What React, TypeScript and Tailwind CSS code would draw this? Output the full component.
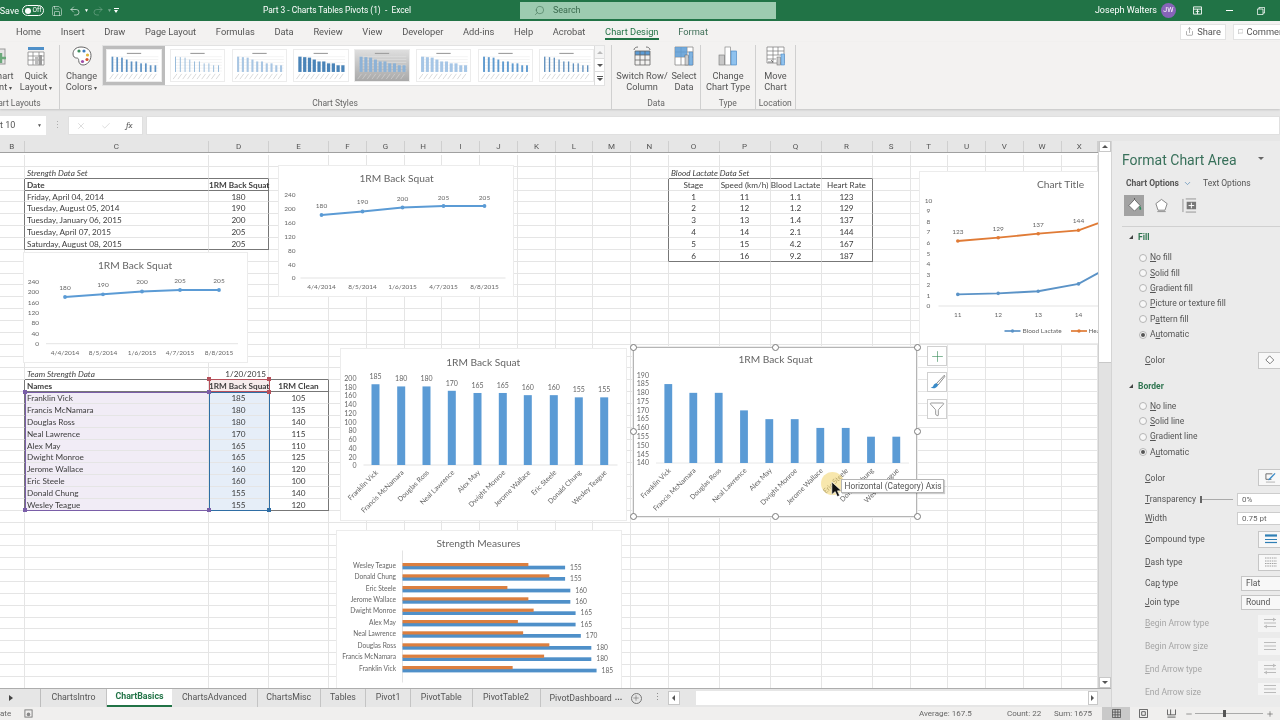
import React from "react";
import { Save, Undo2, Redo2, Search, Share, MessageSquare, Plus, Minus, Funnel, X, Check, ChevronDown } from "lucide-react";

const COLNAMES = ["B","C","D","E","F","G","H","I","J","K","L","M","N","O","P","Q","R","S","T","U","V","W","X"];
const GRIDCOLS = "grid grid-cols-[24.5px_184.5px_60px_60px_38px_38px_37px_38px_38px_38px_37px_38px_37.5px_51px_51px_51px_51px_38px_37.5px_38px_37.5px_38px_36.5px]";

type Cell = { t: string; a?: "l" | "c" | "r"; b?: boolean; i?: boolean };
const cells: Record<string, Cell> = {};
const put = (r: number, c: number, t: string, a: Cell["a"] = "c", b = false, i = false) => { cells[r + ":" + c] = { t, a, b, i }; };
put(1, 1, "Strength Data Set", "l", false, true);
put(2, 1, "Date", "l", true); put(2, 2, "1RM Back Squat", "c", true);
[["Friday, April 04, 2014", "180"], ["Tuesday, August 05, 2014", "190"], ["Tuesday, January 06, 2015", "200"], ["Tuesday, April 07, 2015", "205"], ["Saturday, August 08, 2015", "205"]].forEach((x, k) => { put(3 + k, 1, x[0], "l"); put(3 + k, 2, x[1]); });
put(1, 13, "Blood Lactate Data Set", "l", false, true);
["Stage", "Speed (km/h)", "Blood Lactate", "Heart Rate"].forEach((t, k) => put(2, 13 + k, t));
[["1","11","1.1","123"],["2","12","1.2","129"],["3","13","1.4","137"],["4","14","2.1","144"],["5","15","4.2","167"],["6","16","9.2","187"]].forEach((x, k) => x.forEach((t, j) => put(3 + k, 13 + j, t)));
put(18, 1, "Team Strength Data", "l", false, true); put(18, 2, "1/20/2015", "r");
put(19, 1, "Names", "l", true); put(19, 2, "1RM Back Squat", "c", true); put(19, 3, "1RM Clean", "c", true);
const TEAM: [string, number, number][] = [["Franklin Vick",185,105],["Francis McNamara",180,135],["Douglas Ross",180,140],["Neal Lawrence",170,115],["Alex May",165,110],["Dwight Monroe",165,125],["Jerome Wallace",160,120],["Eric Steele",160,100],["Donald Chung",155,140],["Wesley Teague",155,120]];
TEAM.forEach((x, k) => { put(20 + k, 1, x[0], "l"); put(20 + k, 2, String(x[1])); put(20 + k, 3, String(x[2])); });

const TABLES = [
  { r0: 2, r1: 7, c0: 1, c1: 2, hdr: true },
  { r0: 2, r1: 8, c0: 13, c1: 16, hdr: false },
  { r0: 19, r1: 29, c0: 1, c1: 3, hdr: true },
];
function cellBorder(r: number, c: number) {
  let right = false, bottom = false;
  for (const t of TABLES) {
    const inRows = r >= t.r0 && r <= t.r1, inCols = c >= t.c0 && c <= t.c1;
    if (inRows && (c === t.c1 || c === t.c0 - 1)) right = true;
    if (inCols && (r === t.r1 || r === t.r0 - 1 || (t.hdr && r === t.r0))) bottom = true;
  }
  return (right ? "border-r-[#777] " : "") + (bottom ? "border-b-[#777] " : "");
}

function SheetGrid() {
  const rows = Array.from({ length: 46 }, (_, r) => r);
  return (
    <div className={GRIDCOLS + " auto-rows-[11.87px] pt-[2px] [font-family:Lato,sans-serif] text-[8.2px] leading-[13px] text-[#3d3d3d]"}>
      {rows.flatMap((r) =>
        COLNAMES.map((_, c) => {
          const v = cells[r + ":" + c];
          let bg = "";
          if (c === 1 && r >= 20 && r <= 29) bg = "bg-[#f1ecf6] ";
          if (c === 2 && r >= 20 && r <= 29) bg = "bg-[#e6eef8] ";
          if (c === 2 && r === 19) bg = "bg-[#f6ecec] ";
          return (
            <div key={r + "-" + c} className={"border-r border-b border-[#e5e5e5] whitespace-nowrap " + bg + cellBorder(r, c) + (v ? (v.a === "l" ? "pl-[2.5px] " : v.a === "r" ? "pr-[2px] text-right " : "text-center ") + (v.b ? "font-bold " : "") + (v.i ? "italic " : "") : "")}>
              {v ? v.t : null}
            </div>
          );
        })
      )}
    </div>
  );
}

const BLUE = "#5b9bd5", LBL = "#666666";

function Chart({ cls, vb, title, tx, ty, children }: { cls: string; vb: string; title: string; tx: number; ty: number; children: React.ReactNode }) {
  return (
    <div className={"absolute bg-white ring-1 ring-[#ececec] overflow-hidden " + cls}>
      <svg viewBox={vb} className="block w-full h-full [font-family:Lato,sans-serif]">
        <text x={tx} y={ty + 3.5} textAnchor="middle" fontSize="10.2" fill={LBL}>{title}</text>
        {children}
      </svg>
    </div>
  );
}

function LineBack({ yl, xl, pts, vals, axisY, x0, x1, lx }: { yl: [string, number][]; xl: number; pts: [number, number][]; vals: [string, number][]; axisY: number; x0: number; x1: number; lx: number }) {
  const dates = ["4/4/2014", "8/5/2014", "1/6/2015", "4/7/2015", "8/8/2015"];
  return (
    <g fontSize="6.5" fill={LBL}>
      {yl.map(([t, y]) => <text key={t} x={lx} y={y + 2.2} textAnchor="end">{t}</text>)}
      <line x1={x0} x2={x1} y1={axisY} y2={axisY} stroke="#dcdcdc" strokeWidth="0.8" />
      <polyline points={pts.map((p) => p.join(",")).join(" ")} fill="none" stroke={BLUE} strokeWidth="2" />
      {pts.map((p, i) => <circle key={i} cx={p[0]} cy={p[1]} r="1.9" fill={BLUE} />)}
      {pts.map((p, i) => <text key={"v" + i} x={p[0]} y={vals[i][1] + 2.2} textAnchor="middle">{vals[i][0]}</text>)}
      {pts.map((p, i) => <text key={"d" + i} x={p[0]} y={xl + 2.2} textAnchor="middle">{dates[i]}</text>)}
    </g>
  );
}

function Column1() {
  const xs = [375, 400.7, 426, 451.3, 477, 502.3, 527.3, 553.3, 578.3, 603.7];
  const base = 465, u = 0.4365;
  return (
    <g fontSize="7" fill={LBL}>
      {[200,180,160,140,120,100,80,60,40,20,0].map((v) => <text key={v} x={356} y={base - v * u + 3.3} textAnchor="end">{v}</text>)}
      <line x1={363} x2={617} y1={base} y2={base} stroke="#dcdcdc" strokeWidth="0.8" />
      {TEAM.map(([n, v], i) => (
        <g key={n}>
          <rect x={xs[i] - 4} y={base - v * u} width="8" height={v * u} fill={BLUE} />
          <text x={xs[i]} y={base - v * u - 5} textAnchor="middle">{v}</text>
          <text transform={`rotate(-45 ${xs[i] + 3} 473)`} x={xs[i] + 3} y={473} textAnchor="end">{n}</text>
        </g>
      ))}
    </g>
  );
}

function ColumnSel() {
  const xs = [668.3, 693.3, 718.7, 744, 769.3, 794.7, 820.3, 845.7, 871, 896.3];
  const base = 463, u = 1.754;
  return (
    <g fontSize="7" fill={LBL}>
      {[190,185,180,175,170,165,160,155,150,145,140].map((v) => <text key={v} x={649} y={base - (v - 140) * u + 2.3} textAnchor="end">{v}</text>)}
      <line x1={656} x2={909} y1={base} y2={base} stroke="#e2e2e2" strokeWidth="0.8" />
      {TEAM.map(([n, v], i) => (
        <g key={n}>
          <rect x={xs[i] - 3.9} y={base - (v - 140) * u} width="7.8" height={(v - 140) * u} fill={BLUE} />
          <text transform={`rotate(-45 ${xs[i] + 3} 471)`} x={xs[i] + 3} y={471} textAnchor="end">{n}</text>
        </g>
      ))}
    </g>
  );
}

function Horizontal() {
  const ys = [668.7, 657.3, 646, 634, 622.7, 611.3, 600, 588.7, 577, 565.7];
  const u = 1.049, x0 = 402;
  return (
    <g fontSize="6.6" fill={LBL}>
      <line x1={x0} x2={x0} y1={550} y2={682} stroke="#dcdcdc" strokeWidth="0.8" />
      {TEAM.map(([n, v, o], i) => (
        <g key={n}>
          <text x={395.5} y={ys[i] + 1.5} textAnchor="end">{n}</text>
          <rect x={x0} y={ys[i] - 0.5} width={v * u} height="3.7" fill="#4f90c9" />
          <rect x={x0} y={ys[i] - 3.2} width={o * u} height="3.2" fill="#dc7f3f" />
          <text x={x0 + v * u + 5} y={ys[i] + 3.5}>{v}</text>
        </g>
      ))}
    </g>
  );
}

function Blood() {
  const xs = [957.3, 997.7, 1037.7, 1078, 1118];
  const b = [1.1, 1.2, 1.4, 2.1, 4.2].map((v) => 306 - 10.53 * v);
  const o = [241, 237.7, 233.7, 230.3, 216];
  const pl = (ys: number[]) => xs.map((x, i) => x + "," + ys[i]).join(" ");
  return (
    <g fontSize="6.5" fill={LBL}>
      {[10,9,8,7,6,5,4,3,2,1,0].map((v) => <text key={v} x={928} y={306 - 10.53 * v + 2.2} textAnchor="middle">{v}</text>)}
      <line x1={938} x2={1100} y1={306} y2={306} stroke="#dcdcdc" strokeWidth="0.8" />
      <polyline points={pl(b)} fill="none" stroke="#5b93c7" strokeWidth="1.8" />
      <polyline points={pl(o)} fill="none" stroke="#e07b36" strokeWidth="1.8" />
      {xs.map((x, i) => <circle key={"a" + i} cx={x} cy={b[i]} r="1.8" fill="#5b93c7" />)}
      {xs.map((x, i) => <circle key={"b" + i} cx={x} cy={o[i]} r="1.8" fill="#e07b36" />)}
      {["123","129","137","144"].map((t, i) => <text key={t} x={xs[i]} y={[234,231,227,223][i]} textAnchor="middle">{t}</text>)}
      {["11","12","13","14"].map((t, i) => <text key={t} x={xs[i]} y={317} textAnchor="middle">{t}</text>)}
      <line x1={1004} x2={1020} y1={331} y2={331} stroke="#5b93c7" strokeWidth="1.7" />
      <circle cx={1012} cy={331} r="1.7" fill="#5b93c7" />
      <text x={1022} y={333.2}>Blood Lactate</text>
      <line x1={1070.5} x2={1086.5} y1={331} y2={331} stroke="#e07b36" strokeWidth="1.7" />
      <circle cx={1078.5} cy={331} r="1.7" fill="#e07b36" />
      <text x={1088} y={333.2}>Heart Rate</text>
    </g>
  );
}

const HANDLES = [
  "left-[629.5px] top-[202.5px]", "left-[771.5px] top-[202.5px]", "left-[913.5px] top-[202.5px]",
  "left-[629.5px] top-[286.5px]", "left-[913.5px] top-[286.5px]",
  "left-[629.5px] top-[371.5px]", "left-[771.5px] top-[371.5px]", "left-[913.5px] top-[371.5px]",
];
const SELH = [
  "left-[207px] top-[236px] bg-[#b5505a]", "left-[267px] top-[236px] bg-[#b5505a]", "left-[267px] top-[249px] bg-[#b5505a]",
  "left-[207px] top-[249px] bg-[#7a5ea8]", "left-[22.5px] top-[249px] bg-[#7a5ea8]", "left-[22.5px] top-[367px] bg-[#7a5ea8]",
  "left-[207px] top-[367px] bg-[#7a5ea8]", "left-[267px] top-[367px] bg-[#2f6ea5]",
];

function Sheet() {
  return (
    <div className="relative w-[1098px] flex-1 overflow-hidden bg-white">
      <div className={GRIDCOLS + " h-[12px] bg-[#e6e6e6] border-b border-[#a0a0a0]"}>
        {COLNAMES.map((n) => <div key={n} className="border-r border-[#cfcfcf] text-center text-[8px] leading-[11px] text-[#555]">{n}</div>)}
      </div>
      <SheetGrid />

      <div className="absolute left-[24.5px] top-[250.5px] w-[185px] h-[119px] border-[1.5px] border-[#7a5ea8]" />
      <div className="absolute left-[209px] top-[250.5px] w-[60.5px] h-[119px] border-[1.5px] border-[#2f6ea5]" />
      <div className="absolute left-[209px] top-[238px] w-[60.5px] h-[13px] border-[1.5px] border-[#b5505a]" />
      {SELH.map((c) => <div key={c} className={"absolute w-[4px] h-[4px] " + c} />)}

      <Chart cls="left-[278.5px] top-[25px] w-[234.5px] h-[130px]" vb="278.5 166 234.5 130" title="1RM Back Squat" tx={396} ty={178}>
        <LineBack lx={295} x0={300} x1={505} axisY={278} xl={287}
          yl={[["240",194.5],["200",208.5],["160",222.5],["120",236.5],["80",250.5],["40",264.5],["0",278]]}
          pts={[[321,215],[362,211.5],[402,207.5],[443,206],[484,206]]}
          vals={[["180",206],["190",202],["200",199],["205",197.5],["205",197.5]]} />
      </Chart>
      <Chart cls="left-[24px] top-[112px] w-[223px] h-[109px]" vb="24 253 223 109" title="1RM Back Squat" tx={135} ty={265}>
        <LineBack lx={39} x0={46} x1={238} axisY={343.7} xl={353}
          yl={[["240",281.3],["200",292],["160",302.7],["120",313],["80",323],["40",333.3],["0",343.7]]}
          pts={[[65,297],[103,294.3],[142,291.5],[180,290],[219,290]]}
          vals={[["180",288],["190",285],["200",282],["205",281],["205",281]]} />
      </Chart>
      <Chart cls="left-[340.5px] top-[208px] w-[285px] h-[171px]" vb="340.5 349 285 171" title="1RM Back Squat" tx={482.7} ty={362}><Column1 /></Chart>
      <Chart cls="left-[336.5px] top-[389.5px] w-[284px] h-[170px]" vb="336.5 530.5 284 170" title="Strength Measures" tx={478} ty={543}><Horizontal /></Chart>
      <Chart cls="left-[919.5px] top-[31px] w-[180px] h-[171px]" vb="919.5 172 180 171" title="Chart Title" tx={1060} ty={184.5}><Blood /></Chart>
      <Chart cls="left-[633px] top-[206px] w-[284px] h-[170px]" vb="633 347 284 170" title="1RM Back Squat" tx={775.5} ty={359}><ColumnSel /></Chart>

      <div className="absolute left-[633px] top-[206px] w-[284px] h-[169.5px] border-[1.5px] border-[#b5b5b5]" />
      {HANDLES.map((c) => <div key={c} className={"absolute w-[7px] h-[7px] rounded-full bg-white border border-[#7a7a7a] " + c} />)}

      <div className="absolute left-[927px] top-[205px] w-[20px] h-[20px] bg-white border border-[#d0d0d0] flex items-center justify-center"><Plus size={17} strokeWidth={0.9} className="text-[#3f8f5f]" /></div>
      <div className="absolute left-[927px] top-[231px] w-[20px] h-[20px] bg-white border border-[#d0d0d0] flex items-center justify-center">
        <svg viewBox="0 0 20 20" className="w-[17px] h-[17px]"><path d="M18 1.5 9 11l1.8 1.8L18.5 3z" fill="#fff" stroke="#666" strokeWidth="0.9" /><path d="M9 10.8c-2.6.2-3.4 1.7-4 3.2-.4 1-1.4 1.4-3 1.8 2 1.4 6.8 1.6 8.8-3z" fill="#3a8bc8" /></svg>
      </div>
      <div className="absolute left-[927px] top-[258px] w-[20px] h-[20px] bg-white border border-[#d0d0d0] flex items-center justify-center"><Funnel size={16} strokeWidth={1} className="text-[#666]" /></div>

      <div className="absolute left-[820.5px] top-[331px] w-[23px] h-[23px] rounded-full bg-[#f3d777]/60" />
      <div className="absolute left-[841px] top-[338px] h-[14px] w-[103px] pl-[2.5px] bg-white border border-[#b5b5b5] shadow-[1px_1px_1px_rgba(0,0,0,0.2)] text-[8.3px] leading-[12px] text-[#555] whitespace-nowrap">Horizontal (Category) Axis</div>
      <svg viewBox="0 0 12 18" className="absolute left-[831px] top-[341px] w-[10px] h-[15px]"><path d="M1 0v15l4-3.5 2.7 6 2.6-1.2L7.7 10.6H12.5z" fill="#111" stroke="#fff" strokeWidth="0.7" /></svg>
    </div>
  );
}

function VScroll() {
  return (
    <div className="w-[13px] flex flex-col bg-[#e2e2e2] border-l border-[#cfcfcf]">
      <div className="h-[11px] bg-white border border-[#c8c8c8] text-[#555] flex items-center justify-center"><div className="w-0 h-0 border-x-[3px] border-x-transparent border-b-[3px] border-b-[#555]" /></div>
      <div className="h-[211px] bg-white border-b border-[#c8c8c8]" />
      <div className="flex-1" />
      <div className="h-[11px] bg-white border border-[#c8c8c8] flex items-center justify-center"><div className="w-0 h-0 border-x-[3px] border-x-transparent border-t-[3px] border-t-[#555]" /></div>
    </div>
  );
}

const TABS: [string, string][] = [["ChartsIntro","w-[66px]"],["ChartBasics","w-[65px]"],["ChartsAdvanced","w-[85.5px]"],["ChartsMisc","w-[63.5px]"],["Tables","w-[45px]"],["Pivot1","w-[45px]"],["PivotTable","w-[61.5px]"],["PivotTable2","w-[68px]"]];

function SheetTabs() {
  return (
    <div className="h-[19px] flex items-stretch bg-[#e6e6e6] border-t border-[#adadad] text-[8.8px] text-[#555] w-[1112px]">
      <div className="w-[41px] border-r border-[#bdbdbd] flex items-center pl-[9px]"><div className="w-0 h-0 border-y-[3px] border-y-transparent border-l-[4px] border-l-[#444]" /></div>
      {TABS.map(([t, w]) =>
        t === "ChartBasics"
          ? <div key={t} className={w + " bg-white border-b-2 border-[#217346] flex items-center justify-center font-bold text-[#217346]"}>{t}</div>
          : <div key={t} className={w + " border-r border-[#c4c4c4] flex items-center justify-center"}>{t}</div>
      )}
      <div className="w-[71px] pl-[9px] overflow-hidden whitespace-nowrap leading-[18px]">PivotDashboard</div>
      <div className="w-[14px] leading-[16px] text-center font-bold">...</div>
      <div className="w-[21px] flex items-center justify-center"><div className="w-[11px] h-[11px] rounded-full border border-[#777] flex items-center justify-center"><Plus size={8} strokeWidth={1.5} /></div></div>
      <div className="w-[21px] text-center leading-[16px] text-[#888]">⋮</div>
      <div className="w-[12px] my-[2px] bg-white border border-[#c8c8c8] flex items-center justify-center"><div className="w-0 h-0 border-y-[3px] border-y-transparent border-r-[3px] border-r-[#555]" /></div>
      <div className="w-[16px]" />
      <div className="w-[392px] my-[2px] bg-white" />
      <div className="w-[10px] my-[2px] bg-white border border-[#c8c8c8] flex items-center justify-center"><div className="w-0 h-0 border-y-[3px] border-y-transparent border-l-[3px] border-l-[#555]" /></div>
    </div>
  );
}

function Radio({ on, children }: { on?: boolean; children: React.ReactNode }) {
  return (
    <div className="h-[15.4px] flex items-center pl-[26.5px] text-[8.5px] text-[#555]">
      <div className="w-[8px] h-[8px] rounded-full bg-[#f7f7f7] border border-[#b5b5b5] flex items-center justify-center shrink-0">{on && <div className="w-[4px] h-[4px] rounded-full bg-[#555]" />}</div>
      <div className="ml-[3.5px] whitespace-nowrap">{children}</div>
    </div>
  );
}

function CtlBtn({ children }: { children: React.ReactNode }) {
  return <div className="w-[30px] h-[17px] bg-[#f8f8f8] border border-[#c6c6c6] flex items-center pl-[6px] shrink-0">{children}</div>;
}

const Lines = ({ c = "#777" }: { c?: string }) => (
  <svg viewBox="0 0 12 10" className="w-[12px] h-[10px]"><path d="M0 1.5h12M0 5h12M0 8.5h12" stroke={c} strokeWidth="1.2" /></svg>
);
const Arrows = () => (
  <svg viewBox="0 0 12 12" className="w-[12px] h-[12px]"><path d="M0 2.5h12M0 6h12M0 9.5h12M9 1l2 1.5L9 4M3 8 1 9.5 3 11" stroke="#bbb" fill="none" strokeWidth="1" /></svg>
);

function Head({ cls, t }: { cls: string; t: string }) {
  return (
    <div className={"h-[16px] flex items-center pl-[17px] " + cls}>
      <div className="w-0 h-0 border-l-[4px] border-l-transparent border-b-[4px] border-b-[#444] mr-[5px]" />
      <span className="text-[8.5px] font-bold text-[#2f7550]">{t}</span>
    </div>
  );
}

function Panel() {
  const rowLabel = "text-[8.5px] text-[#555] whitespace-nowrap";
  return (
    <div className="w-[169px] bg-[#ebebeb] border-l border-[#d4d4d4] overflow-hidden">
      <div className="h-[560px] overflow-hidden w-[220px]">
        <div className="h-[27px] mt-[6px] flex items-center pl-[10px]">
          <span className="w-[136px] text-[14px] text-[#38705a] whitespace-nowrap">Format Chart Area</span>
          <div className="w-0 h-0 border-x-[3px] border-x-transparent border-t-[3px] border-t-[#666] mb-[5px]" />
        </div>
        <div className="h-[14px] mt-[2px] flex items-center pl-[14px] text-[8.5px] text-[#555]">
          <span className="font-bold w-[56px] whitespace-nowrap">Chart Options</span>
          <ChevronDown size={9} className="ml-[1px] text-[#5f8fb8]" />
          <span className="ml-[11px]">Text Options</span>
        </div>
        <div className="h-[21px] mt-[5px] flex items-center pl-[12px]">
          <div className="w-[20px] h-[21px] bg-[#a2a2a2] flex items-center justify-center">
            <svg viewBox="0 0 16 16" className="w-[15px] h-[15px]"><path d="M8 1.5 14 8l-6 6-6-6z" fill="#fff" stroke="#555" strokeWidth="0.8" /><path d="M8 1.5V0" stroke="#555" /><path d="M13.6 8c1 1.5 1.6 2.6 1.6 3.6a1 1 0 0 1-2 0c0-.6 0-2 .4-3.6z" fill="#2b8a5a" /></svg>
          </div>
          <svg viewBox="0 0 16 16" className="w-[15px] h-[15px] ml-[10px]"><path d="M8 1.5 14 6l-2.3 7H4.3L2 6z" fill="#fff" stroke="#777" strokeWidth="0.9" /><path d="M3.5 14.5h9" stroke="#777" strokeWidth="0.8" /></svg>
          <svg viewBox="0 0 16 16" className="w-[15px] h-[15px] ml-[13px]"><path d="M1 1v14M4 1h11M4 15h11" stroke="#888" strokeWidth="0.9" fill="none" /><rect x="5" y="4" width="10" height="8" fill="#777" /><path d="M10 5v6M7 8h6" stroke="#fff" strokeWidth="1" /></svg>
        </div>
        <div className="h-[1px] mt-[10px] ml-[10px] w-[160px] bg-[#d0d0d0]" />
        <Head cls="mt-[2px]" t="Fill" />
        <div className="mt-[5px]">
          <Radio><u>N</u>o fill</Radio>
          <Radio><u>S</u>olid fill</Radio>
          <Radio><u>G</u>radient fill</Radio>
          <Radio><u>P</u>icture or texture fill</Radio>
          <Radio>P<u>a</u>ttern fill</Radio>
          <Radio on>A<u>u</u>tomatic</Radio>
        </div>
        <div className="h-[18px] mt-[9px] flex items-center pl-[33px]">
          <div className={rowLabel + " w-[113px]"}><u>C</u>olor</div>
          <CtlBtn><svg viewBox="0 0 12 12" className="w-[10px] h-[10px]"><path d="M5.5 1 10.5 6l-4.5 4.5L1 6z" fill="#fff" stroke="#666" /></svg></CtlBtn>
        </div>
        <Head cls="mt-[9px]" t="Border" />
        <div className="mt-[4px]">
          <Radio><u>N</u>o line</Radio>
          <Radio><u>S</u>olid line</Radio>
          <Radio><u>G</u>radient line</Radio>
          <Radio on>A<u>u</u>tomatic</Radio>
        </div>
        <div className="h-[18px] mt-[9px] flex items-center pl-[33px]">
          <div className={rowLabel + " w-[113px]"}><u>C</u>olor</div>
          <CtlBtn><svg viewBox="0 0 12 12" className="w-[11px] h-[11px]"><path d="M1 2h7M1 2v6h6" stroke="#666" fill="none" /><path d="M10.5 1 4 7.5 3.5 9l1.6-.4L11.5 2z" fill="#3a8bc8" /><path d="M1 11h10" stroke="#bbb" strokeWidth="1.2" /></svg></CtlBtn>
        </div>
        <div className="h-[16px] mt-[4.5px] flex items-center pl-[33px]">
          <div className={rowLabel + " w-[55px]"}><u>T</u>ransparency</div>
          <div className="w-[33px] h-[7px] flex items-center relative"><div className="w-full h-[1px] bg-[#aaa]" /><div className="absolute left-0 top-0 w-[1.5px] h-[7px] bg-[#666]" /></div>
          <div className="ml-[4px] w-[44px] h-[13px] bg-white border border-[#cdcdcd] pl-[4px] text-[8px] leading-[11px] text-[#666]">0%</div>
        </div>
        <div className="h-[16px] mt-[3px] flex items-center pl-[33px]">
          <div className={rowLabel + " w-[92px]"}><u>W</u>idth</div>
          <div className="w-[44px] h-[13px] bg-white border border-[#cdcdcd] pl-[4px] text-[8px] leading-[11px] text-[#666]">0.75 pt</div>
        </div>
        <div className="h-[18px] mt-[4px] flex items-center pl-[33px]">
          <div className={rowLabel + " w-[113px]"}><u>C</u>ompound type</div>
          <CtlBtn><svg viewBox="0 0 12 10" className="w-[12px] h-[10px]"><path d="M0 1.5h12" stroke="#2f7fb5" strokeWidth="2.2" /><path d="M0 5.5h12" stroke="#2f7fb5" strokeWidth="1" /><path d="M0 8.5h12" stroke="#2f7fb5" strokeWidth="1.2" /></svg></CtlBtn>
        </div>
        <div className="h-[18px] mt-[5px] flex items-center pl-[33px]">
          <div className={rowLabel + " w-[113px]"}><u>D</u>ash type</div>
          <CtlBtn><svg viewBox="0 0 12 10" className="w-[12px] h-[10px]"><path d="M0 1h12M0 4h12M0 6.5h12M0 9h12" stroke="#888" strokeWidth="0.8" strokeDasharray="1.5 0.8" /></svg></CtlBtn>
        </div>
        <div className="h-[16px] mt-[4px] flex items-center pl-[33px]">
          <div className={rowLabel + " w-[96px]"}>Ca<u>p</u> type</div>
          <div className="w-[44px] h-[15px] bg-[#f8f8f8] border border-[#c6c6c6] pl-[4px] text-[8.5px] leading-[13px] text-[#555]">Flat</div>
        </div>
        <div className="h-[16px] mt-[3px] flex items-center pl-[33px]">
          <div className={rowLabel + " w-[96px]"}><u>J</u>oin type</div>
          <div className="w-[44px] h-[15px] bg-[#f8f8f8] border border-[#c6c6c6] pl-[4px] text-[8.5px] leading-[13px] text-[#555]">Round</div>
        </div>
        {([[<><u>B</u>egin Arrow type</>, <Arrows />, "mt-[4px]", "h-[17px]"], [<>Begin Arrow <u>s</u>ize</>, <Lines c="#bbb" />, "mt-[5px]", "h-[17px]"], [<><u>E</u>nd Arrow type</>, <Arrows />, "mt-[5px]", "h-[17px]"], [<>End Arrow size</>, <Lines c="#bbb" />, "mt-[5px]", "h-[12px] self-start"]] as [React.ReactNode, React.ReactNode, string, string][]).map((r, i) => (
          <div key={i} className={"h-[18px] flex items-center pl-[33px] " + r[2]}>
            <div className="w-[113px] text-[8.5px] text-[#a6a6a6] whitespace-nowrap">{r[0]}</div>
            <div className={"w-[30px] bg-[#f4f4f4] flex items-center pl-[6px] shrink-0 overflow-hidden " + r[3]}>{r[1]}</div>
          </div>
        ))}
      </div>
    </div>
  );
}

function Thumb({ cls, w, bar = "#5b9bd5", bg = "bg-white" }: { cls: string; w: number; bar?: string; bg?: string }) {
  const hs = [16, 15.5, 15, 13, 11, 11, 9, 9, 7, 7];
  return (
    <div className={cls + " h-[33.5px] shrink-0 " + bg + " border border-[#ececec]"}>
      <svg viewBox="0 0 55 33" className="block w-full h-full">
        <rect x="20" y="3" width="15" height="1.2" fill="#a0a0a0" />
        {[7, 10, 13, 16, 19, 22].map((y) => <path key={y} d={`M4 ${y}h49`} stroke="#e8e8e8" strokeWidth="0.5" />)}
        {hs.map((h, i) => (
          <g key={i}>
            <rect x={4 + i * 5} y={23 - h} width={w} height={h} fill={bar} />
            <path d={`M${6 + i * 5} 25l-4 5.5`} stroke="#cfcfcf" strokeWidth="0.8" />
          </g>
        ))}
      </svg>
    </div>
  );
}

function RibbonText({ a, b, caret }: { a: string; b: string; caret?: boolean }) {
  return (
    <div className="mt-[4px] text-center leading-[11px] text-[9.2px] text-[#555] whitespace-nowrap">
      <div>{a}</div>
      <div>{b}{caret && <span className="text-[6px] ml-[2px]">▾</span>}</div>
    </div>
  );
}

function Group({ cls, label, labelCls = "text-center", children }: { cls: string; label: string; labelCls?: string; children: React.ReactNode }) {
  return (
    <div className={"h-[64px] mt-[3px] flex flex-col justify-between border-r border-[#d0d0d0] overflow-hidden " + cls}>
      <div className="flex items-start pt-[1px]">{children}</div>
      <div className={"text-[8.5px] leading-[11px] text-[#666] whitespace-nowrap " + labelCls}>{label}</div>
    </div>
  );
}

function Ribbon() {
  return (
    <div className="h-[67px] bg-[#f3f2f1] shadow-[0_1px_2px_rgba(0,0,0,0.15)] flex relative">
      <Group cls="w-[60px]" label="Chart Layouts" labelCls="-ml-[12px]">
        <div className="w-[44px] -ml-[29px] shrink-0 flex flex-col items-center">
          <svg viewBox="0 0 24 20" className="w-[24px] h-[20px] shrink-0 translate-x-[2px]"><rect x="2" y="3" width="20" height="15" fill="#e4e4e4" stroke="#999" /><path d="M18 7v10M13 12h10" stroke="#6aa97a" strokeWidth="2.4" /></svg>
          <RibbonText a="Add Chart" b="Element" caret />
        </div>
        <div className="w-[42px] shrink-0 flex flex-col items-center">
          <svg viewBox="0 0 20 20" className="w-[20px] h-[20px] shrink-0"><rect x="2" y="1" width="16" height="3" fill="#4f90c9" /><path d="M2 6h16v13H2zM2 10h16M2 14h16M7 6v13M13 6v13" fill="#fff" stroke="#888" strokeWidth="0.8" /><rect x="9" y="11" width="3" height="8" fill="#bbb" /><rect x="13" y="9" width="3" height="10" fill="#9a9a9a" /></svg>
          <RibbonText a="Quick" b="Layout" caret />
        </div>
      </Group>
      <Group cls="w-[552px]" label="Chart Styles" labelCls="text-center -ml-[1px]">
        <div className="w-[41px] ml-[1px] shrink-0 flex flex-col items-center">
          <svg viewBox="0 0 20 20" className="w-[20px] h-[20px]"><path d="M9 1C3.5 1 1 4.5 1 8c0 2.8 2 4 3.5 4 1.8 0 2.2 1 2.2 2.5C6.7 17 8.3 19 11 19c4.5 0 8-4.5 8-9.5S15 1 9 1z" fill="#fff" stroke="#666" /><circle cx="7" cy="5" r="1.6" fill="#3f8f5f" /><circle cx="12" cy="5" r="1.6" fill="#3f7fc0" /><circle cx="15.5" cy="9" r="1.6" fill="#e2b93b" /><circle cx="15" cy="13.5" r="1.6" fill="#d4522f" /><circle cx="10.5" cy="15.5" r="1.6" fill="#a04fa8" /></svg>
          <RibbonText a="Change" b="Colors" caret />
        </div>
        <div className="-mt-[1px] flex items-center h-[41px] w-[503px] bg-white border border-[#e2e2e2] shrink-0 relative">
          <div className="w-[62px] h-[39px] bg-[#bdbdbd] flex items-center justify-center shrink-0"><Thumb cls="w-[56px]" w={1.8} bar="#5f93c4" /></div>
          <div className="w-[5px] shrink-0" />
          <Thumb cls="w-[55px]" w={0.9} bar="#8ab2d6" />
          <div className="w-[7px] shrink-0" />
          <Thumb cls="w-[55px]" w={2.2} bar="#a9c6e3" />
          <div className="w-[6px] shrink-0" />
          <Thumb cls="w-[55.5px]" w={3.4} bar="#4a84b8" />
          <div className="w-[5.5px] shrink-0" />
          <Thumb cls="w-[56px]" w={3.2} bar="#8db2d6" bg="bg-gradient-to-b from-[#dedede] to-[#a9a9a9]" />
          <div className="w-[6px] shrink-0" />
          <Thumb cls="w-[55px]" w={3.2} bar="#a6c6e6" />
          <div className="w-[6.5px] shrink-0" />
          <Thumb cls="w-[55px]" w={2} bar="#5f9bd0" />
          <div className="w-[6.5px] shrink-0" />
          <Thumb cls="w-[55px]" w={1.4} bar="#5f8fbd" />
          <div className="absolute right-0 top-0 w-[10px] h-[39px] flex flex-col border-l border-[#dcdcdc]">
            <div className="h-[13px] flex items-center justify-center border-b border-[#dcdcdc] bg-[#f5f5f5]"><div className="w-0 h-0 border-x-[3px] border-x-transparent border-b-[3px] border-b-[#bbb]" /></div>
            <div className="h-[13px] flex items-center justify-center border-b border-[#dcdcdc] bg-white"><div className="w-0 h-0 border-x-[3px] border-x-transparent border-t-[3px] border-t-[#555]" /></div>
            <div className="h-[13px] flex flex-col items-center justify-center bg-white"><div className="w-[6px] h-[1px] bg-[#555] mb-[1px]" /><div className="w-0 h-0 border-x-[3px] border-x-transparent border-t-[3px] border-t-[#555]" /></div>
          </div>
        </div>
      </Group>
      <Group cls="w-[89px]" label="Data">
        <div className="w-[50px] ml-[5px] shrink-0 flex flex-col items-center">
          <svg viewBox="0 0 20 20" className="w-[20px] h-[20px]"><rect x="3" y="5" width="15" height="4" fill="#5b9bd5" /><path d="M3 5h15v14H3zM3 9h15M3 14h15M8 5v14M13 5v14" fill="none" stroke="#666" strokeWidth="0.8" /><path d="M2 4c0-2 2-3 4-3M14 1c2 0 4 1 4 3" stroke="#555" strokeWidth="0.8" fill="none" /></svg>
          <RibbonText a="Switch Row/" b="Column" />
        </div>
        <div className="w-[30px] ml-[2px] shrink-0 flex flex-col items-center">
          <svg viewBox="0 0 20 20" className="w-[20px] h-[20px]"><path d="M1 1h18v18H1zM1 6h18M1 11h18M7 1v18M13 1v18" fill="#fff" stroke="#888" strokeWidth="0.8" /><rect x="1" y="1" width="12" height="10" fill="#5b9bd5" opacity="0.85" /><rect x="11" y="9" width="3.5" height="10" fill="#ccc" stroke="#666" strokeWidth="0.5" /><rect x="15" y="6" width="3.5" height="13" fill="#7fb4e2" stroke="#3f7fc0" strokeWidth="0.5" /></svg>
          <RibbonText a="Select" b="Data" />
        </div>
      </Group>
      <Group cls="w-[54.5px]" label="Type">
        <div className="w-[54px] shrink-0 flex flex-col items-center">
          <svg viewBox="0 0 20 20" className="w-[20px] h-[20px]"><rect x="1" y="9" width="5.5" height="10" fill="#c8c8c8" stroke="#777" strokeWidth="0.6" /><rect x="7" y="1" width="5.5" height="18" fill="#fff" stroke="#777" strokeWidth="0.6" /><rect x="13" y="5" width="5.5" height="14" fill="#8fc2ee" stroke="#3f7fc0" strokeWidth="0.6" /></svg>
          <RibbonText a="Change" b="Chart Type" />
        </div>
      </Group>
      <Group cls="w-[40.5px]" label="Location">
        <div className="w-[40px] shrink-0 flex flex-col items-center">
          <svg viewBox="0 0 20 20" className="w-[20px] h-[20px]"><path d="M1 1h17v16H1zM1 5h17M1 9h17M1 13h9M7 1v16M12 1v8" fill="#fff" stroke="#777" strokeWidth="0.7" /><rect x="11" y="11" width="3.5" height="8" fill="#ccc" stroke="#666" strokeWidth="0.5" /><rect x="15" y="8" width="3.5" height="11" fill="#8fc2ee" stroke="#3f7fc0" strokeWidth="0.5" /><path d="M2 16h5l-2-2" stroke="#555" strokeWidth="0.7" fill="none" /></svg>
          <RibbonText a="Move" b="Chart" />
        </div>
      </Group>
    </div>
  );
}

function TopBar() {
  return (
    <div className="h-[21px] bg-[#217346] flex items-center text-white relative shrink-0">
      <div className="w-[22px] overflow-hidden text-[9px] leading-[12px] whitespace-nowrap flex justify-end pr-[3px]">AutoSave</div>
      <div className="w-[22px] h-[11px] rounded-full border border-white flex items-center pl-[2px] gap-[1.5px] text-[6.5px] leading-none">
        <div className="w-[6px] h-[6px] rounded-full bg-white" />Off
      </div>
      <Save size={12} strokeWidth={1} className="ml-[7px]" />
      <Undo2 size={12} strokeWidth={1.2} className="ml-[6px]" />
      <span className="text-[5px] ml-[3px]">▼</span>
      <Redo2 size={12} strokeWidth={1.2} className="ml-[3px] opacity-40" />
      <span className="text-[5px] ml-[3px] opacity-40">▼</span>
      <div className="ml-[2px] flex flex-col items-center"><div className="w-[5px] h-[1px] bg-white mb-[1px]" /><div className="w-0 h-0 border-x-[2.5px] border-x-transparent border-t-[3px] border-t-white" /></div>
      <div className="ml-[144px] w-[257px] text-[8.4px] whitespace-pre">Part 3 - Charts Tables Pivots (1)  -  Excel</div>
      <div className="w-[256px] h-[17px] bg-[#9dcbb0] flex items-center pl-[14px] text-[#3b6b4f] text-[9px]">
        <Search size={11} strokeWidth={1.2} className="-scale-x-100" /><span className="ml-[8px]">Search</span>
      </div>
      <div className="ml-[319px] w-[63px] text-[9px] whitespace-nowrap">Joseph Walters</div>
      <div className="ml-[3px] w-[15px] h-[15px] rounded-full bg-[#8764b8] text-[7px] flex items-center justify-center">JW</div>
      <svg viewBox="0 0 10 10" className="w-[9px] h-[9px] ml-[17px]"><path d="M.5 1h9v8h-9zM.5 3.5h9M5 3.5V9M3 6h4" stroke="#fff" fill="none" /></svg>
      <div className="ml-[24px] w-[7px] h-[1px] bg-white" />
      <svg viewBox="0 0 10 10" className="w-[8px] h-[8px] ml-[24px]"><path d="M.5 2.5h7v7h-7zM2.5 2.5v-2h7v7h-2" stroke="#fff" fill="none" /></svg>
    </div>
  );
}

const RTABS = ["Home","Insert","Draw","Page Layout","Formulas","Data","Review","View","Developer","Add-ins","Help","Acrobat"];

function TabBar() {
  return (
    <div className="h-[21px] bg-[#f3f2f1] flex items-center text-[9.3px] text-[#555] relative shrink-0">
      <div className="flex items-center gap-[19.7px] pl-[16px] whitespace-nowrap">
        {RTABS.map((t) => <div key={t}>{t}</div>)}
        <div className="relative text-[#217346]">Chart Design<div className="absolute left-0 right-0 top-[13px] h-[2px] bg-[#217346]" /></div>
        <div className="text-[#3f6f58]">Format</div>
      </div>
      <div className="flex-1" />
      <div className="h-[16px] w-[46px] bg-white border border-[#e2e2e2] flex items-center justify-center gap-[3px]"><Share size={9} strokeWidth={1.2} />Share</div>
      <div className="h-[16px] ml-[7px] w-[60px] bg-white border border-[#e2e2e2] flex items-center pl-[4px] gap-[3px] whitespace-nowrap -mr-[13px]"><MessageSquare size={9} strokeWidth={1.2} />Comments</div>
    </div>
  );
}

function FormulaBar() {
  return (
    <div className="h-[19px] mt-[7px] flex shrink-0 text-[#777]">
      <div className="w-[46px] bg-white flex items-center text-[9px] overflow-hidden text-[#555] whitespace-nowrap pl-0 relative">
        <span className="-ml-[19px]">Chart 10</span>
        <span className="absolute left-[37px] text-[5px]">▼</span>
      </div>
      <div className="w-[22px] text-center text-[9px] leading-[18px] text-[#aaa]">⋮</div>
      <div className="w-[75px] bg-white border border-[#e0e0e0] flex items-center">
        <X size={10} strokeWidth={1.1} className="ml-[7px] text-[#b5b5b5]" />
        <Check size={10} strokeWidth={1.1} className="ml-[15px] text-[#b5b5b5]" />
        <span className="ml-[15px] text-[9px] italic font-serif text-[#555]">fx</span>
      </div>
      <div className="flex-1 ml-[3px] bg-white border border-[#e0e0e0]" />
    </div>
  );
}

function StatusBar() {
  return (
    <div className="h-[13px] bg-[#f0efee] flex items-center text-[8px] text-[#666] whitespace-nowrap shrink-0">
      <span className="w-[24px]">ate</span>
      <svg viewBox="0 0 10 10" className="w-[9px] h-[9px]"><rect x="1" y="1" width="8" height="8" fill="none" stroke="#777" /><circle cx="5" cy="6" r="2" fill="#888" /></svg>
      <span className="ml-[886px] w-[88px]">Average: 167.5</span>
      <span className="w-[47px]">Count: 22</span>
      <span className="w-[48px]">Sum: 1675</span>
      <div className="w-[28px] h-[13px] bg-[#c9c9c9] flex items-center justify-center"><svg viewBox="0 0 10 10" className="w-[9px] h-[9px]"><path d="M.5.5h9v9h-9zM.5 3.5h9M.5 6.5h9M3.5.5v9M6.5.5v9" stroke="#444" fill="none" strokeWidth="0.8" /></svg></div>
      <svg viewBox="0 0 10 10" className="w-[9px] h-[9px] ml-[9px]"><path d="M.5.5h9v9h-9z" stroke="#555" fill="none" /><path d="M3 3h4v4H3z" stroke="#555" fill="none" /></svg>
      <svg viewBox="0 0 10 10" className="w-[9px] h-[9px] ml-[19px]"><path d="M.5.5v6h9v-6M.5 9h9M4 .5v6" stroke="#555" fill="none" /></svg>
      <Minus size={8} className="ml-[9px]" />
      <div className="ml-[2px] w-[68px] h-[1px] bg-[#aaa] relative"><div className="absolute left-[28px] -top-[3px] w-[3px] h-[7px] bg-[#555]" /></div>
      <Plus size={8} className="ml-[3px]" />
    </div>
  );
}

export default function App() {
  return (
    <div className="w-[1280px] h-[720px] overflow-hidden flex flex-col bg-[#e6e6e6] [font-family:Roboto,sans-serif] blur-[0.3px]">
      <TopBar />
      <TabBar />
      <Ribbon />
      <FormulaBar />
      <div className="h-[6px] shrink-0" />
      <div className="flex h-[566px] shrink-0">
        <div className="w-[1111px] flex flex-col">
          <div className="flex h-[547px]">
            <div className="flex flex-col h-full"><Sheet /></div>
            <VScroll />
          </div>
          <SheetTabs />
        </div>
        <Panel />
      </div>
      <StatusBar />
    </div>
  );
}
